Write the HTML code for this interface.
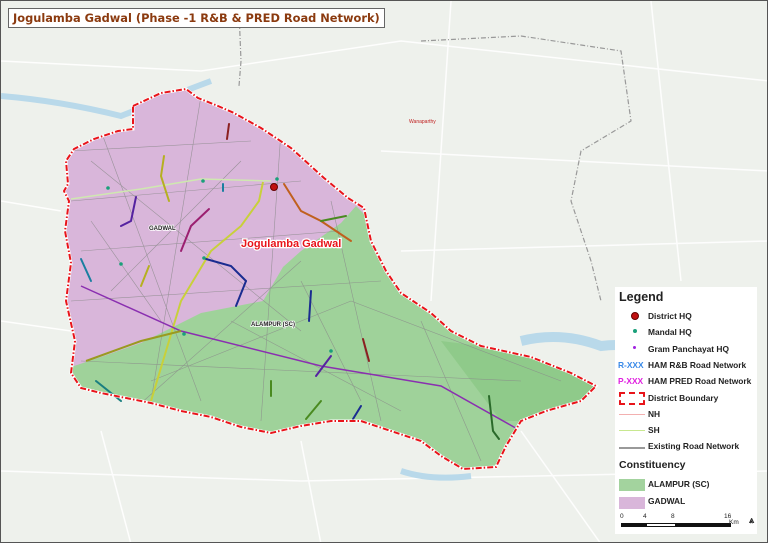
<!DOCTYPE html>
<html><head><style>
body{margin:0;width:768px;height:543px;overflow:hidden;background:#fff;font-family:"Liberation Sans",sans-serif}
#f{position:absolute;left:0;top:0;width:766px;height:541px;border:1px solid #555;background:#eef1ec;overflow:hidden}
#t{position:absolute;left:7px;top:7px;border:1.5px solid #666;background:#fff;padding:2px 4px;font-family:"DejaVu Sans",sans-serif;font-weight:bold;font-size:11.4px;color:#8b3a0f;white-space:nowrap}
#lg{position:absolute;left:614px;top:286px;width:142px;height:247px;background:#fff;font-size:8.4px;font-weight:bold;color:#222}
#lg div{position:absolute;white-space:nowrap}
</style></head><body><div id="f">
<svg width="768" height="543" style="position:absolute;left:0;top:0">
<defs><clipPath id="d"><path id="dp" d="M132,105 L160,92 L185,88 L197,97 L217,105 L233,112 L260,127 L290,147 L323,177 L347,197 L363,207 L370,240 L385,270 L400,292 L430,312 L450,330 L480,345 L530,356 L570,372 L595,385 L580,400 L545,410 L520,420 L505,445 L495,466 L462,468 L440,455 L420,440 L390,430 L360,420 L330,420 L300,425 L270,432 L240,426 L210,416 L180,410 L150,402 L100,392 L80,387 L70,372 L74,340 L65,300 L70,262 L64,230 L68,200 L63,190 L67,183 L65,160 L73,148 L93,138 L117,130 L132,128 Z"/></clipPath></defs>
<g stroke="#fff" stroke-width="1.5" fill="none" opacity=".9">
<path d="M0,60 L200,70 L400,40 L768,80"/><path d="M0,200 L60,210"/><path d="M380,150 L768,170"/><path d="M400,250 L768,240"/><path d="M0,470 L300,480 L768,470"/><path d="M450,0 L430,300"/><path d="M650,0 L680,280"/><path d="M0,320 L70,330"/><path d="M100,430 L130,543"/><path d="M300,440 L320,543"/><path d="M520,430 L600,543"/>
</g>
<path d="M0,95 Q60,100 120,115 Q170,95 210,80" stroke="#b9d9ea" stroke-width="6" fill="none"/>
<path d="M520,340 Q560,330 600,345 Q640,340 660,360" stroke="#b9d9ea" stroke-width="10" fill="none"/>
<path d="M400,470 Q430,480 470,475" stroke="#b9d9ea" stroke-width="6" fill="none"/>
<path d="M238,10 L240,60 L238,85" stroke="#999" stroke-width="1.2" stroke-dasharray="5,2,1,2" fill="none"/>
<path d="M420,40 L520,35 L620,50 L630,120 L580,150 L570,200 L590,260 L600,300" stroke="#999" stroke-width="1.2" stroke-dasharray="5,2,1,2" fill="none"/>
<g clip-path="url(#d)">
<rect x="0" y="0" width="768" height="543" fill="#d9b6da"/>
<path d="M355,205 L340,222 L300,250 L282,266 L262,300 L200,312 L160,332 L140,342 L100,356 L70,366 L70,500 L620,500 L620,300 L400,250 Z" fill="#9fd29a"/>
<path d="M440,340 L600,360 L600,420 L500,420 Z" fill="#8fca8a"/>
<g stroke="#8a8a8a" stroke-width=".6" fill="none" opacity=".8">
<path d="M70,200 L300,180"/><path d="M80,250 L340,230"/><path d="M70,300 L380,280"/><path d="M100,130 L200,400"/><path d="M200,95 L150,400"/><path d="M280,130 L260,420"/><path d="M330,200 L380,420"/><path d="M80,360 L520,380"/><path d="M90,160 L300,330"/><path d="M420,320 L480,460"/><path d="M150,380 L350,300"/><path d="M110,290 L240,160"/><path d="M350,300 L560,380"/>
<path d="M70,150 L250,140"/><path d="M120,420 L300,260"/><path d="M230,320 L400,410"/><path d="M300,280 L360,400"/><path d="M90,220 L160,320"/>
</g>
<path d="M70,198 L140,188 L200,178 L270,180" stroke="#cfe8b0" stroke-width="1.5" fill="none"/>
<path d="M262,181 L258,200 L240,225 L210,250 L180,300 L150,400" stroke="#c8d03a" stroke-width="2" fill="none"/>
<path d="M80,285 L180,330 L320,365 L440,385 L520,430" stroke="#8a2fb0" stroke-width="1.5" fill="none"/>
<path d="M85,360 L140,340 L180,330" stroke="#9a9a20" stroke-width="2" fill="none"/>
</g>
<g stroke-width="2" fill="none" stroke-linecap="round">
<path d="M228,123 L226,138" stroke="#8b2020"/><path d="M163,155 L160,175 L168,200" stroke="#b5b020"/><path d="M222,183 L222,190" stroke="#1a7fa0"/>
<path d="M135,196 L130,220 L120,225" stroke="#5522a0"/><path d="M208,208 L190,225 L180,250" stroke="#9b2070"/>
<path d="M283,183 L300,210 L320,220 L350,240" stroke="#c0601e"/><path d="M320,220 L345,215" stroke="#4a8a20"/>
<path d="M205,258 L230,265 L245,280" stroke="#1a2c90"/><path d="M245,280 L235,305" stroke="#1a2c90"/>
<path d="M80,258 L90,280" stroke="#1a7fa0"/><path d="M148,265 L140,285" stroke="#b5b020"/>
<path d="M310,290 L308,320" stroke="#1a2c90"/><path d="M362,338 L368,360" stroke="#8b2020"/>
<path d="M330,355 L315,375" stroke="#5522a0"/><path d="M270,380 L270,395" stroke="#4a8a20"/>
<path d="M95,380 L120,400" stroke="#1a7f80"/><path d="M360,405 L352,418" stroke="#1a2c90"/>
<path d="M488,395 L492,430 L498,438" stroke="#2a6a2a"/><path d="M320,400 L305,418" stroke="#4a8a20"/>
</g>
<use href="#dp" fill="none" stroke="#fff" stroke-width="3"/>
<use href="#dp" fill="none" stroke="#e8141a" stroke-width="2" stroke-dasharray="6,2,1.5,2"/>
<circle cx="273" cy="186" r="3.5" fill="#c01010" stroke="#600" stroke-width="1"/>
<g fill="#1aa07a"><circle cx="107" cy="187" r="1.8"/><circle cx="202" cy="180" r="1.8"/><circle cx="276" cy="178" r="1.8"/><circle cx="203" cy="257" r="1.8"/><circle cx="183" cy="333" r="1.8"/><circle cx="120" cy="263" r="1.8"/><circle cx="330" cy="350" r="1.8"/></g>
<text x="240" y="246" font-size="11" font-weight="bold" fill="#e8141a" stroke="#fff" stroke-width="2.5" paint-order="stroke" font-family="Liberation Sans">Jogulamba Gadwal</text>
<text x="148" y="229" font-size="6" font-weight="bold" fill="#222" stroke="#fff" stroke-width="1.5" paint-order="stroke">GADWAL</text>
<text x="250" y="325" font-size="6" font-weight="bold" fill="#222" stroke="#fff" stroke-width="1.5" paint-order="stroke">ALAMPUR (SC)</text>
<text x="408" y="122" font-size="5" fill="#c02020">Wanaparthy</text>
</svg>
<div id="t">Jogulamba Gadwal (Phase -1 R&amp;B &amp; PRED Road Network)</div>
<div id="lg">
<div style="left:4px;top:3px;font-size:12.5px">Legend</div>
<div style="left:16px;top:25px;width:6px;height:6px;border-radius:50%;background:#c01010;border:1px solid #600"></div><div style="left:33px;top:24px">District HQ</div>
<div style="left:18px;top:42px;width:4px;height:4px;border-radius:50%;background:#1aa07a"></div><div style="left:33px;top:40px">Mandal HQ</div>
<div style="left:18px;top:59px;width:3px;height:3px;border-radius:50%;background:#a020e0"></div><div style="left:33px;top:57px">Gram Panchayat HQ</div>
<div style="left:3px;top:73px;color:#3a8ae8">R-XXX</div><div style="left:33px;top:73px">HAM R&amp;B Road Network</div>
<div style="left:3px;top:89px;color:#e020e0">P-XXX</div><div style="left:33px;top:89px">HAM PRED Road Network</div>
<div style="left:4px;top:105px;width:22px;height:9px;border:2px dashed #e8141a"></div><div style="left:33px;top:106px">District Boundary</div>
<div style="left:4px;top:127px;width:26px;height:1px;background:#f3b0b0"></div><div style="left:33px;top:122px">NH</div>
<div style="left:4px;top:143px;width:26px;height:1px;background:#c8e890"></div><div style="left:33px;top:138px">SH</div>
<div style="left:4px;top:160px;width:26px;height:2px;background:#999"></div><div style="left:33px;top:154px">Existing Road Network</div>
<div style="left:4px;top:172px;font-size:10.5px">Constituency</div>
<div style="left:4px;top:192px;width:26px;height:12px;background:#a3d39e"></div><div style="left:33px;top:192px">ALAMPUR (SC)</div>
<div style="left:4px;top:210px;width:26px;height:12px;background:#d9b6da"></div><div style="left:33px;top:209px">GADWAL</div>
<div style="left:5px;top:226px;font-size:6.5px;font-weight:normal">0</div><div style="left:28px;top:226px;font-size:6.5px;font-weight:normal">4</div><div style="left:56px;top:226px;font-size:6.5px;font-weight:normal">8</div><div style="left:109px;top:226px;font-size:6.5px;font-weight:normal">16</div>
<div style="left:6px;top:236px;width:110px;height:4px;background:#111"></div><div style="left:32px;top:237px;width:28px;height:2px;background:#fff"></div>
<div style="left:114px;top:232px;font-size:6.5px;font-weight:normal">Km</div>
<div style="left:134px;top:228px;font-size:9px">⩓</div>
</div>
</div></body></html>
